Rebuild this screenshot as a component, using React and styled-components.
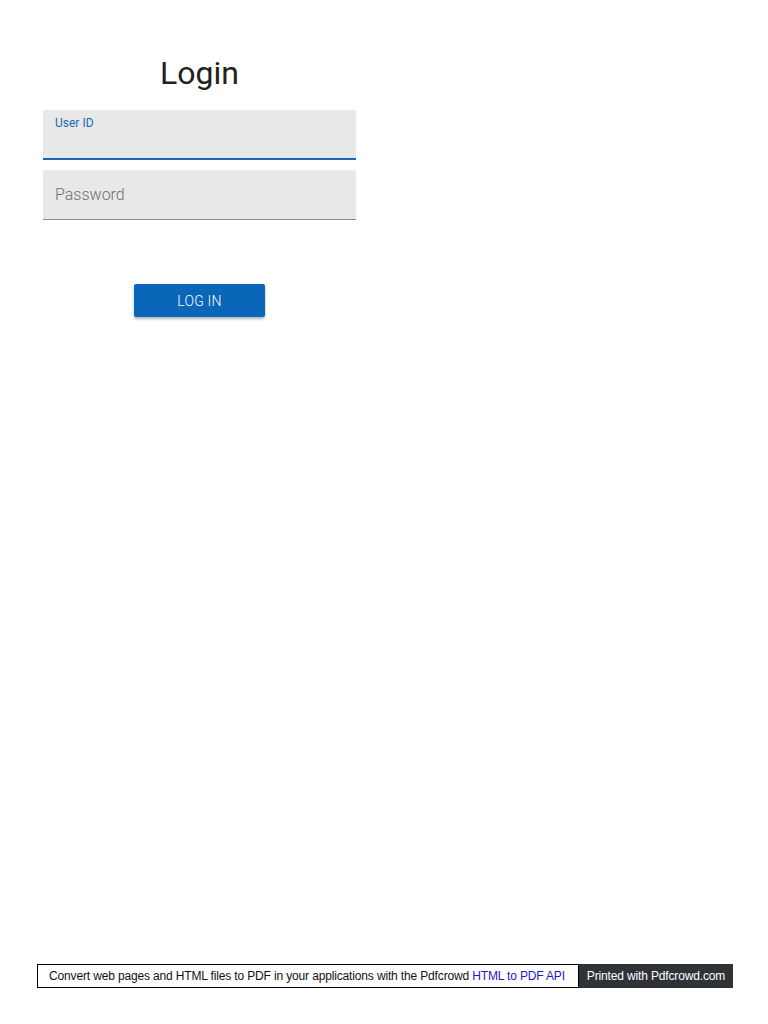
import React from 'react';
import styled, {createGlobalStyle} from "styled-components";

const Global = createGlobalStyle`
  html, body {
    margin: 0;
    padding: 0;
    background: #fff;
  }
`

const Page = styled.div`
  min-height: 1024px;
  display: flex;
  flex-direction: column;
  box-sizing: border-box;
  font-family: Roboto, "Liberation Sans", sans-serif;
`

const Form = styled.form`
  width: 313px;
  margin: 54px 0 0 43px;
  display: flex;
  flex-direction: column;
`

const Title = styled.h1`
  margin: 0 0 18px;
  font-size: 32px;
  font-weight: 400;
  line-height: 38px;
  color: #212121;
  text-align: center;
`

const Field = styled.label`
  position: relative;
  display: block;
  height: 50px;
  margin-bottom: 10px;
  background: #e8e8e8;
  border-radius: 2px 2px 0 0;
  border-bottom: ${p => p.focused ? '2px solid #1a68b3' : '1px solid #8a8a8a'};
  box-sizing: border-box;
`

const Label = styled.span`
  position: absolute;
  left: 12px;
  top: ${p => p.small ? '6px' : '15px'};
  font-size: ${p => p.small ? '12px' : '16px'};
  font-weight: ${p => p.small ? 400 : 300};
  color: ${p => p.small ? '#1a68b3' : '#6e6e6e'};
`

const Input = styled.input`
  width: 100%;
  height: 100%;
  border: 0;
  background: transparent;
  outline: none;
  padding: 18px 12px 0;
  box-sizing: border-box;
  font: inherit;
  font-size: 16px;
`

const Actions = styled.div`
  display: flex;
  justify-content: center;
  margin-top: 54px;
`

const Button = styled.button`
  width: 131px;
  height: 33px;
  border: 0;
  border-radius: 2px;
  background: #0a66b8;
  color: #fff;
  font-family: Roboto, "Liberation Sans", sans-serif;
  font-size: 14px;
  font-weight: 300;
  letter-spacing: 0.2px;
  box-shadow: 0 2px 3px rgba(0, 0, 0, 0.3);
  cursor: pointer;
`

const Footer = styled.div`
  margin: auto 0 36px 37px;
  display: flex;
  font-family: "Liberation Sans", Arial, sans-serif;
  font-size: 12px;
  line-height: 22px;
  white-space: nowrap;
`

const Note = styled.div`
  width: 542px;
  height: 24px;
  box-sizing: border-box;
  border: 1px solid #000;
  background: #fff;
  color: #111;
  padding-left: 11px;
  letter-spacing: -0.15px;
  overflow: hidden;

  a {
    color: #1a1acc;
    text-decoration: none;
  }
`

const Printed = styled.div`
  width: 154px;
  height: 24px;
  background: #2f3338;
  color: #fff;
  text-align: center;
  line-height: 24px;
  letter-spacing: -0.15px;
`

const App = () => {
    return (
        <Page>
            <Global/>
            <Form onSubmit={e => e.preventDefault()}>
                <Title>Login</Title>
                <Field focused>
                    <Label small>User ID</Label>
                    <Input type="text"/>
                </Field>
                <Field>
                    <Label>Password</Label>
                    <Input type="password"/>
                </Field>
                <Actions>
                    <Button type="submit">LOG IN</Button>
                </Actions>
            </Form>
            <Footer>
                <Note>
                    Convert web pages and HTML files to PDF in your applications with the Pdfcrowd <a href="#">HTML to PDF API</a>
                </Note>
                <Printed>Printed with Pdfcrowd.com</Printed>
            </Footer>
        </Page>
    );
};

export default App;
